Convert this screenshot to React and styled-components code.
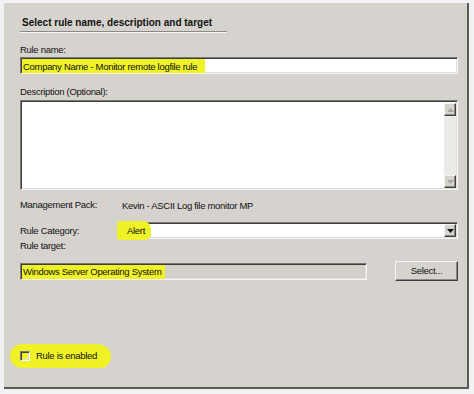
import React from "react";
import styled, { createGlobalStyle } from "styled-components";

const GlobalStyle = createGlobalStyle`
  html, body { margin: 0; padding: 0; background: #f2f2f2; }
  body {
    font-family: "Liberation Sans", Arial, sans-serif;
    font-size: 9.5px;
    letter-spacing: -0.3px;
    color: #111;
  }
`;

const YELLOW = "#eef226";

const Frame = styled.div`
  box-sizing: border-box;
  margin: 3px 0 0 4px;
  width: 465px;
  height: 386px;
  background: #d6d3ce;
  border-right: 2px solid #5a5a5a;
  border-bottom: 2px solid #5a5a5a;
  padding: 0 9px 0 16px;
  display: flex;
  flex-direction: column;
`;

const TitleWrap = styled.div`
  margin-top: 13px;
  width: 205px;
  padding: 0 0 2px 2px;
  border-bottom: 1px solid #8a8a8a;
  box-shadow: 0 1px 0 #f6f6f6;
`;

const Title = styled.div`
  font-weight: bold;
  font-size: 10px;
  letter-spacing: 0;
  line-height: 13px;
  color: #111;
`;

const Label = styled.div`
  line-height: 12px;
  margin-top: ${(p) => p.$mt || 0}px;
`;

const Sunken = styled.div`
  box-sizing: border-box;
  border-style: solid;
  border-width: 1px;
  border-color: #7a7a7a #f4f4f4 #f4f4f4 #7a7a7a;
  box-shadow: inset 1px 1px 0 #3e3e3e, inset -1px -1px 0 #e2e0dc;
`;

const TextField = styled(Sunken)`
  margin-top: ${(p) => p.$mt || 0}px;
  height: ${(p) => p.$h || 17}px;
  width: ${(p) => p.$w || "100%"};
  background: ${(p) => (p.$readonly ? "#d3d0ca" : "#fff")};
  display: flex;
  align-items: stretch;
  padding: 1px 0 0 1px;
  flex: ${(p) => (p.$grow ? 1 : "none")};
`;

const Highlight = styled.span`
  background: ${YELLOW};
  display: flex;
  align-items: center;
  padding: 0 ${(p) => p.$pr || 6}px 0 1px;
  white-space: nowrap;
`;

const TextArea = styled(Sunken)`
  margin-top: 2px;
  height: 90px;
  background: #fff;
  display: flex;
  justify-content: flex-end;
  padding: 2px 1px 1px 2px;
`;

const ScrollBar = styled.div`
  width: 12px;
  background: #eceae6;
  display: flex;
  flex-direction: column;
  justify-content: space-between;
`;

const RaisedBtn = styled.div`
  box-sizing: border-box;
  width: 12px;
  height: 13px;
  background: #d6d3ce;
  border-style: solid;
  border-width: 1px;
  border-color: #f4f4f4 #404040 #404040 #f4f4f4;
  box-shadow: inset -1px -1px 0 #8a8a8a;
  display: flex;
  align-items: center;
  justify-content: center;
`;

const Arrow = styled.svg`
  width: 7px;
  height: 4px;
  fill: ${(p) => (p.$disabled ? "#a8a6a2" : "#111")};
`;

const Row = styled.div`
  display: flex;
  align-items: center;
  margin-top: ${(p) => p.$mt || 0}px;
  gap: ${(p) => p.$gap || 0}px;
`;

const RowLabel = styled.div`
  width: 102px;
  line-height: 12px;
  flex: none;
`;

const Combo = styled(Sunken)`
  flex: 1;
  height: 17px;
  background: #fff;
  display: flex;
  align-items: stretch;
  justify-content: space-between;
  padding: 1px 1px 1px 1px;
`;

const Blob = styled.span`
  position: relative;
  display: flex;
  align-items: center;
  padding-left: 3px;
  z-index: 0;
  &::before {
    content: "";
    position: absolute;
    z-index: -1;
    left: -7px;
    right: -6px;
    top: -3px;
    bottom: -3px;
    background: ${YELLOW};
    border-radius: 4px 8px 6px 4px;
  }
`;

const ComboBtn = styled(RaisedBtn)`
  height: 100%;
  width: 12px;
`;

const Button = styled.div`
  box-sizing: border-box;
  width: 63px;
  height: 20px;
  background: #d6d3ce;
  border-style: solid;
  border-width: 1px;
  border-color: #f6f6f6 #3e3e3e #3e3e3e #f6f6f6;
  box-shadow: inset -1px -1px 0 #8c8c8c;
  display: flex;
  align-items: center;
  justify-content: center;
  padding-bottom: 1px;
`;

const CheckRow = styled.div`
  margin-top: 63px;
  margin-left: -10px;
  align-self: flex-start;
  display: flex;
  align-items: center;
  gap: 6px;
  background: ${YELLOW};
  padding: 6px 14px 7px 10px;
  border-radius: 12px 14px 10px 12px / 12px 12px 12px 12px;
`;

const CheckBox = styled(Sunken)`
  width: 10px;
  height: 10px;
  background: ${YELLOW};
`;

export default function App() {
  return (
    <>
      <GlobalStyle />
      <Frame>
        <TitleWrap>
          <Title>Select rule name, description and target</Title>
        </TitleWrap>

        <Label $mt={12}>Rule name:</Label>
        <TextField $mt={1}>
          <Highlight $pr={8}>Company Name - Monitor remote logfile rule</Highlight>
        </TextField>

        <Label $mt={12}>Description (Optional):</Label>
        <TextArea>
          <ScrollBar>
            <RaisedBtn>
              <Arrow $disabled viewBox="0 0 7 4">
                <polygon points="3.5,0 7,4 0,4" />
              </Arrow>
            </RaisedBtn>
            <RaisedBtn>
              <Arrow $disabled viewBox="0 0 7 4">
                <polygon points="0,0 7,0 3.5,4" />
              </Arrow>
            </RaisedBtn>
          </ScrollBar>
        </TextArea>

        <Row $mt={9}>
          <RowLabel>Management Pack:</RowLabel>
          <span>Kevin - ASCII Log file monitor MP</span>
        </Row>

        <Row $mt={11}>
          <RowLabel>Rule Category:</RowLabel>
          <Combo>
            <Blob>Alert</Blob>
            <ComboBtn>
              <Arrow viewBox="0 0 7 4">
                <polygon points="0,0 7,0 3.5,4" />
              </Arrow>
            </ComboBtn>
          </Combo>
        </Row>

        <Label $mt={1}>Rule target:</Label>
        <Row $mt={9} $gap={28}>
          <TextField $readonly $grow>
            <Highlight $pr={3}>Windows Server Operating System</Highlight>
          </TextField>
          <Button>Select...</Button>
        </Row>

        <CheckRow>
          <CheckBox />
          <span>Rule is enabled</span>
        </CheckRow>
      </Frame>
    </>
  );
}
